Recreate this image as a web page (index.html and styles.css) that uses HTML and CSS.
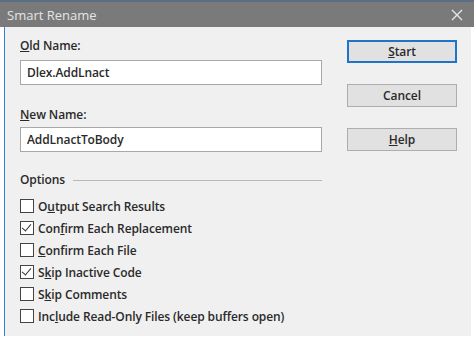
FILE: index.html
```html
<!DOCTYPE html>
<html lang="en">
<head>
  <meta charset="UTF-8" />
  <title>Smart Rename</title>
  <link rel="stylesheet" href="styles.css">
</head>
<body>

  <div class="window">
    <!-- Title bar -->
    <div class="titlebar">
      <span class="title">Smart Rename</span>
      <svg class="close" width="12" height="12" viewBox="0 0 12 12">
        <path d="M1 1 L11 11 M11 1 L1 11" stroke="#e6e6e6" stroke-width="1.4" fill="none"/>
      </svg>
    </div>

    <div class="client">
      <!-- Left column: names and options -->
      <div class="fields">
        <div class="label first"><u>O</u>ld Name:</div>
        <div class="input">Dlex.AddLnact</div>

        <div class="label second"><u>N</u>ew Name:</div>
        <div class="input">AddLnactToBody</div>

        <div class="group">
          <span>Options</span>
          <div class="rule"></div>
        </div>

        <div class="checks">
          <div class="check"><span class="box"></span>O<u>u</u>tput Search Results</div>
          <div class="check"><span class="box on"></span>Con<u>f</u>irm Each Replacement</div>
          <div class="check"><span class="box"></span><u>C</u>onfirm Each File</div>
          <div class="check"><span class="box on"></span>S<u>k</u>ip Inactive Code</div>
          <div class="check"><span class="box"></span>S<u>k</u>ip Comments</div>
          <div class="check"><span class="box"></span>Inc<u>l</u>ude Read-Only Files (keep buffers open)</div>
        </div>
      </div>

      <!-- Right column: buttons -->
      <div class="buttons">
        <button class="btn default"><u>S</u>tart</button>
        <button class="btn">Cancel</button>
        <button class="btn"><u>H</u>elp</button>
      </div>
    </div>
  </div>

</body>
</html>
```

FILE: styles.css
```css
body {
  margin: 0;
  background: #fff;
  font-family: "Open Sans", "Noto Sans", sans-serif;
  font-size: 12px;
  font-weight: 600;
  letter-spacing: -0.1px;
  color: #2a2a2a;
}

.window {
  width: 474px;
  height: 339px;
}

.titlebar {
  height: 25px;
  border-top: 2px solid #5a6f86;
  background: #7a7a7a;
  display: flex;
  align-items: center;
  justify-content: space-between;
  padding: 0 11px 0 7px;
}

.title {
  color: #e4e4e4;
  font-size: 13px;
  font-weight: 400;
  letter-spacing: 0;
}

.client {
  margin-left: 4px;
  width: 466px;
  height: 309px;
  border-left: 1px solid #3a7fcf;
  background: #f0f0f0;
  display: flex;
}

.fields {
  width: 302px;
  padding-left: 15px;
}

.label {
  line-height: 16px;
}

.label.first {
  margin-top: 11px;
  margin-bottom: 6px;
}

.label.second {
  margin-top: 22px;
  margin-bottom: 4px;
}

.input {
  height: 23px;
  border: 1px solid #a8a8a8;
  background: #fff;
  line-height: 23px;
  padding-left: 6px;
}

.group {
  display: flex;
  align-items: center;
  gap: 8px;
  margin-top: 20px;
  line-height: 16px;
}

.rule {
  flex: 1;
  height: 1px;
  background: #b8b8b8;
}

.checks {
  margin-top: 7px;
}

.check {
  height: 22px;
  display: flex;
  align-items: center;
  white-space: nowrap;
}

.box {
  width: 12px;
  height: 12px;
  border: 1px solid #444;
  background: #fff;
  margin: 0 4px 0 0;
  position: relative;
}

.box.on::after {
  content: "";
  position: absolute;
  left: 3px;
  top: 0px;
  width: 4px;
  height: 8px;
  border-right: 1.5px solid #333;
  border-bottom: 1.5px solid #333;
  transform: rotate(40deg);
}

.buttons {
  margin-left: 25px;
  padding-top: 13px;
  display: flex;
  flex-direction: column;
  gap: 21px;
}

.btn {
  width: 110px;
  height: 23px;
  background: #e1e1e1;
  border: 1px solid #adadad;
  font-family: inherit;
  font-size: 12px;
  font-weight: 600;
  letter-spacing: -0.1px;
  color: #2a2a2a;
  padding: 0;
}

.btn.default {
  border: 2px solid #1f74c9;
}
```
